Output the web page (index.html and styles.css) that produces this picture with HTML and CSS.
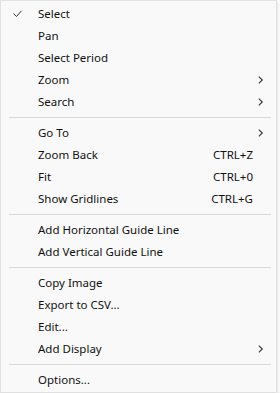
FILE: index.html
```html
<!DOCTYPE html>
<html>
<head>
<meta charset="utf-8">
<link rel="stylesheet" href="styles.css">
</head>
<body>
<div class="menu">
  <div class="item">
    <span class="check"><svg width="10" height="8" viewBox="0 0 10 8"><polyline points="0.5,3.5 3.5,6.5 8.5,0.8" fill="none" stroke="#333" stroke-width="1"/></svg></span>
    <span class="label">Select</span><span class="key"></span><span class="arrow"></span>
  </div>
  <div class="item"><span class="check"></span><span class="label">Pan</span><span class="key"></span><span class="arrow"></span></div>
  <div class="item"><span class="check"></span><span class="label">Select Period</span><span class="key"></span><span class="arrow"></span></div>
  <div class="item"><span class="check"></span><span class="label">Zoom</span><span class="key"></span><span class="arrow"><svg width="6" height="8" viewBox="0 0 6 8"><polyline points="0.8,0.6 4.3,4 0.8,7.4" fill="none" stroke="#333" stroke-width="1.1"/></svg></span></div>
  <div class="item"><span class="check"></span><span class="label">Search</span><span class="key"></span><span class="arrow"><svg width="6" height="8" viewBox="0 0 6 8"><polyline points="0.8,0.6 4.3,4 0.8,7.4" fill="none" stroke="#333" stroke-width="1.1"/></svg></span></div>
  <div class="sep"></div>
  <div class="item"><span class="check"></span><span class="label">Go To</span><span class="key"></span><span class="arrow"><svg width="6" height="8" viewBox="0 0 6 8"><polyline points="0.8,0.6 4.3,4 0.8,7.4" fill="none" stroke="#333" stroke-width="1.1"/></svg></span></div>
  <div class="item"><span class="check"></span><span class="label">Zoom Back</span><span class="key">CTRL+Z</span><span class="arrow"></span></div>
  <div class="item"><span class="check"></span><span class="label">Fit</span><span class="key">CTRL+0</span><span class="arrow"></span></div>
  <div class="item"><span class="check"></span><span class="label">Show Gridlines</span><span class="key">CTRL+G</span><span class="arrow"></span></div>
  <div class="sep"></div>
  <div class="item"><span class="check"></span><span class="label">Add Horizontal Guide Line</span><span class="key"></span><span class="arrow"></span></div>
  <div class="item"><span class="check"></span><span class="label">Add Vertical Guide Line</span><span class="key"></span><span class="arrow"></span></div>
  <div class="sep"></div>
  <div class="item"><span class="check"></span><span class="label">Copy Image</span><span class="key"></span><span class="arrow"></span></div>
  <div class="item"><span class="check"></span><span class="label">Export to CSV...</span><span class="key"></span><span class="arrow"></span></div>
  <div class="item"><span class="check"></span><span class="label">Edit...</span><span class="key"></span><span class="arrow"></span></div>
  <div class="item"><span class="check"></span><span class="label">Add Display</span><span class="key"></span><span class="arrow"><svg width="6" height="8" viewBox="0 0 6 8"><polyline points="0.8,0.6 4.3,4 0.8,7.4" fill="none" stroke="#333" stroke-width="1.1"/></svg></span></div>
  <div class="sep"></div>
  <div class="item"><span class="check"></span><span class="label">Options...</span><span class="key"></span><span class="arrow"></span></div>
</div>
</body>
</html>
```

FILE: styles.css
```css
html, body {
  margin: 0;
  padding: 0;
  background: #ffffff;
}
.menu {
  width: 275px;
  border: 1px solid #e2e2e2;
  background: #f9f9f9;
  padding: 2px 0 1px 0;
  box-shadow: 1px 1px 3px rgba(0, 0, 0, 0.12);
  font-family: "Noto Sans", "Open Sans", sans-serif;
  font-size: 11.5px;
  color: #111111;
}
.item {
  display: grid;
  grid-template-columns: 37px 1fr auto 23px;
  align-items: center;
  height: 22px;
}
.check {
  display: flex;
  justify-content: flex-start;
  padding-left: 12px;
  align-items: center;
}
.check svg { display: block; }
.label,
.key {
  white-space: nowrap;
  padding-bottom: 2px;
}
.key {
  text-align: right;
}
.arrow {
  display: flex;
  align-items: center;
  padding-left: 5px;
}
.arrow svg { display: block; }
.sep {
  height: 1px;
  background: #d9d9d9;
  margin: 4px 5px 4px 8px;
}
```
